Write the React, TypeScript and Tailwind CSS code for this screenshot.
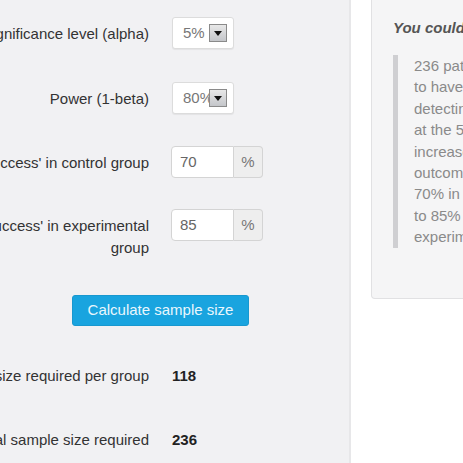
import React from "react";

const FONT = { fontFamily: '"Liberation Sans", Arial, sans-serif' };

function Label({ children }: { children: React.ReactNode }) {
  return (
    <div className="w-[149px] shrink-0 flex justify-end pt-[6px]">
      <div className="whitespace-nowrap text-right text-[15px] leading-[22px] text-[#333]">{children}</div>
    </div>
  );
}

function FakeSelect({ value }: { value: string }) {
  return (
    <div className="relative ml-[23px] w-[62px] h-[32px] bg-white border border-[#dcdcdc] rounded-[3px] shadow-[0_1px_1px_rgba(0,0,0,0.06)]">
      <span className="absolute left-[10px] top-[6px] text-[15px] leading-[18px] text-[#777]">{value}</span>
      <div className="absolute left-[36px] top-[6px] w-[18px] h-[18px] border border-[#8a8a8a] bg-gradient-to-b from-[#e8e8e8] to-[#c4c6ca] flex items-center justify-center">
        <svg width="8" height="5" viewBox="0 0 8 5">
          <path d="M0 0 L8 0 L4 5 Z" fill="#111" />
        </svg>
      </div>
    </div>
  );
}

function PercentInput({ value }: { value: string }) {
  return (
    <div className="ml-[22px] flex h-[32px]">
      <div className="w-[63px] bg-white border border-[#d4d4d4] rounded-l-[4px] pl-[8px] flex items-center text-[15px] text-[#666]">
        {value}
      </div>
      <div className="w-[29px] bg-[#eeeeee] border border-l-0 border-[#d4d4d4] rounded-r-[4px] flex items-center justify-center text-[15px] text-[#777]">
        %
      </div>
    </div>
  );
}

export default function App() {
  return (
    <div className="w-[463px] h-[463px] overflow-hidden bg-white flex" style={FONT}>
      {/* form panel */}
      <div className="w-[351px] shrink-0 h-full bg-[#f1f1f3] border-r-2 border-[#e7e7e9] pt-[17px]">
        <div className="flex items-start">
          <Label>Significance level (alpha)</Label>
          <FakeSelect value="5%" />
        </div>
        <div className="flex items-start mt-[33px]">
          <Label>Power (1-beta)</Label>
          <FakeSelect value="80%" />
        </div>
        <div className="flex items-start mt-[32px]">
          <Label>Percentage 'success' in control group</Label>
          <PercentInput value="70" />
        </div>
        <div className="flex items-start mt-[31px]">
          <Label>
            Percentage 'success' in experimental
            <br />
            group
          </Label>
          <PercentInput value="85" />
        </div>

        <button className="ml-[72px] mt-[36px] w-[177px] h-[31px] rounded-[3px] bg-[#19a4df] border border-[#1898cf] text-[15px] text-[#e9f7fd]">
          Calculate sample size
        </button>

        <div className="flex items-start mt-[33px]">
          <Label>Sample size required per group</Label>
          <div className="ml-[23px] pt-[6px] text-[15px] leading-[22px] font-bold text-[#222]">118</div>
        </div>
        <div className="flex items-start mt-[36px]">
          <Label>Total sample size required</Label>
          <div className="ml-[23px] pt-[6px] text-[15px] leading-[22px] font-bold text-[#222]">236</div>
        </div>
      </div>

      {/* result panel */}
      <div className="ml-[20px] shrink-0 w-[300px] h-[299px] bg-[#f5f5f6] border border-t-0 border-[#e1e1e3] rounded-bl-[4px] pl-[21px] pt-[17px]">
        <div className="text-[15px] leading-[21px] font-bold italic text-[#555]">You could write:</div>
        <div className="mt-[17px] border-l-[5px] border-[#cfcfd2] pl-[16px] text-[15px] leading-[21.4px] text-[#8a8a8a] whitespace-nowrap">
          236 patients are required
          <br />
          to have a 80% chance of
          <br />
          detecting, as significant
          <br />
          at the 5% level, an
          <br />
          increase in the primary
          <br />
          outcome measure from
          <br />
          70% in the control group
          <br />
          to 85% in the
          <br />
          experimental group.
        </div>
      </div>
    </div>
  );
}
